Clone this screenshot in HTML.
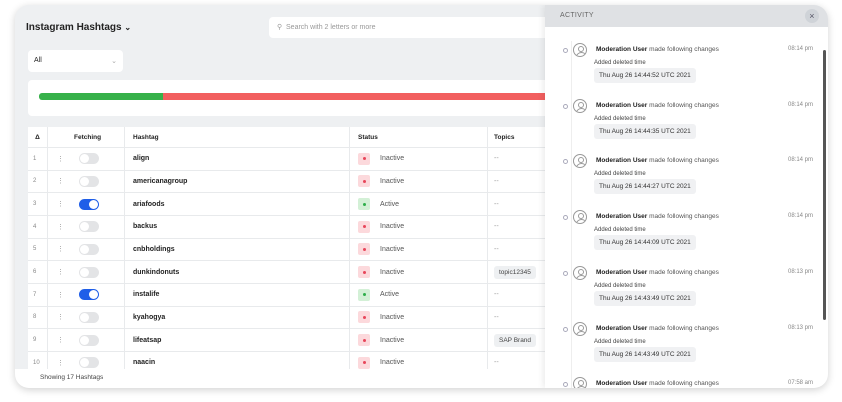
<!DOCTYPE html><html><head><style>
*{margin:0;padding:0;box-sizing:border-box}
html,body{width:842px;height:402px;overflow:hidden}
body{background:#fff;font-family:"Liberation Sans",sans-serif;position:relative;color:#222}
.frame{position:absolute;left:15px;top:5px;width:813px;height:383px;border-radius:14px;background:#eef0f2;box-shadow:0 2px 8px rgba(0,0,0,.18);overflow:hidden}
.a{position:absolute}
.row{position:absolute;left:13px;width:517px;height:22.7px;background:#fff;border-bottom:1px solid #e8eaec;font-size:7px;display:flex;align-items:center}
.c{position:absolute;top:0;height:100%;display:flex;align-items:center;border-right:1px solid #e8eaec}
.tg{width:20px;height:11px;border-radius:6px;background:#e3e4e6;position:relative}
.tg::after{content:"";position:absolute;left:1px;top:1px;width:9px;height:9px;border-radius:50%;background:#fff}
.tg.on{background:#1f5ee8}.tg.on::after{left:10px}
.st{width:12px;height:12px;border-radius:2px;background:#fcd9dc;position:relative;margin-right:10px}
.st::after{content:"";position:absolute;left:4.5px;top:4.5px;width:3px;height:3px;border-radius:50%;background:#e8465a}
.st.g{background:#d3f0d6}.st.g::after{background:#2eae4a}
.chip{background:#eef0f2;border-radius:3px;padding:3px 5px;font-size:6.5px;color:#444}
.ent{position:absolute;left:0;width:283px;height:56px}
.ent .dot{position:absolute;left:18px;top:3px;width:5px;height:5px;border:1px solid #aab;border-radius:50%}
.ent .av{position:absolute;left:28px;top:-2px;width:14px;height:14px;border:1.3px solid #999;border-radius:50%;overflow:hidden}
.ent .av::before{content:"";position:absolute;left:3.5px;top:2px;width:4px;height:4px;border:1.2px solid #999;border-radius:50%}
.ent .av::after{content:"";position:absolute;left:1.5px;top:8px;width:9px;height:8px;border:1.2px solid #999;border-radius:50%}
.ent .t{position:absolute;left:51px;top:1px;font-size:6.5px;color:#555}
.ent .t b{color:#222}
.ent .tm{position:absolute;left:243px;top:1px;font-size:6px;color:#888}
.ent .s{position:absolute;left:49px;top:15px;font-size:6px;color:#444}
.ent .d{position:absolute;left:49px;top:23px;background:#f0f1f3;border-radius:3px;padding:4px 5px;font-size:6.5px;color:#333}
</style></head><body>
<div class="frame">
<div class="a" style="left:11px;top:17px;font-size:10px;font-weight:bold;color:#222">Instagram Hashtags <span style="font-size:8px">&#8964;</span></div>
<div class="a" style="left:254px;top:12px;width:290px;height:21px;background:#fff;border-radius:4px;font-size:7px;color:#999;padding:6px 8px">&#9906; &nbsp;Search with 2 letters or more</div>
<div class="a" style="left:13px;top:45px;width:95px;height:22px;background:#fff;border-radius:4px;font-size:7px;padding:7px 6px">All<span style="position:absolute;right:6px;color:#aaa">&#8964;</span></div>
<div class="a" style="left:13px;top:75px;width:530px;height:36px;background:#fff;border-radius:4px"></div>
<div class="a" style="left:24px;top:88px;width:124px;height:7px;background:#37b14a;border-radius:3px 0 0 3px"></div>
<div class="a" style="left:148px;top:88px;width:390px;height:7px;background:#f25f5f"></div>
<div class="row" style="top:122px;height:21px;font-weight:bold;font-size:6.5px;background:#fff">
<div class="c" style="left:0;width:20px;justify-content:center">&#916;</div>
<div class="c" style="left:20px;width:77px;padding-left:26px">Fetching</div>
<div class="c" style="left:97px;width:225px;padding-left:8px">Hashtag</div>
<div class="c" style="left:322px;width:138px;padding-left:8px">Status</div>
<div class="c" style="left:460px;width:57px;padding-left:6px;border:0">Topics</div>
</div>
<div id="rows"></div>
<div class="a" style="left:0;top:364px;width:530px;height:19px;background:#fff;font-size:6.5px;color:#444;padding:5px 25px">Showing 17 Hashtags</div>
<div class="a" style="left:530px;top:0;width:283px;height:383px;background:#fff;box-shadow:-2px 0 6px rgba(0,0,0,.08);overflow:hidden">
<div class="a" style="left:0;top:0;width:283px;height:22px;background:#dfe1e4;font-size:7px;color:#666;padding:7px 15px;letter-spacing:.3px">ACTIVITY<span style="position:absolute;right:9px;top:4px;width:14px;height:14px;border-radius:50%;background:#cfd3d8;font-size:9px;text-align:center;line-height:14px;color:#556">&#215;</span></div>
<div class="a" style="left:26px;top:36px;width:1px;height:347px;background:#eee"></div>
<div class="a" style="left:278px;top:45px;width:3px;height:270px;background:#555;border-radius:2px"></div>
<div id="acts"></div>
</div>
</div>
<script>
var d=[["align",0,0,"--"],["americanagroup",0,0,"--"],["ariafoods",1,1,"--"],["backus",0,0,"--"],["cnbholdings",0,0,"--"],["dunkindonuts",0,0,"topic12345"],["instalife",1,1,"--"],["kyahogya",0,0,"--"],["lifeatsap",0,0,"SAP Brand"],["naacin",0,0,"--"]];
var h="";d.forEach(function(r,i){var t=143+i*22.65;h+='<div class="row" style="top:'+t+'px"><div class="c" style="left:0;width:20px;padding-left:5px;color:#888;font-size:6px">'+(i+1)+'</div><div class="c" style="left:20px;width:77px;padding-left:9px;color:#999">&#8942;<span style="width:15px;display:inline-block"></span><div class="tg'+(r[1]?' on':'')+'"></div></div><div class="c" style="left:97px;width:225px;padding-left:8px;font-weight:bold">'+r[0]+'</div><div class="c" style="left:322px;width:138px;padding-left:8px;color:#555"><div class="st'+(r[2]?' g':'')+'"></div>'+(r[2]?'Active':'Inactive')+'</div><div class="c" style="left:460px;width:57px;padding-left:6px;border:0;color:#999">'+(r[3]=="--"?'--':'<span class="chip">'+r[3]+'</span>')+'</div></div>';});
document.getElementById("rows").innerHTML=h;
var a=[["08:14 pm","Thu Aug 26 14:44:52 UTC 2021"],["08:14 pm","Thu Aug 26 14:44:35 UTC 2021"],["08:14 pm","Thu Aug 26 14:44:27 UTC 2021"],["08:14 pm","Thu Aug 26 14:44:09 UTC 2021"],["08:13 pm","Thu Aug 26 14:43:49 UTC 2021"],["08:13 pm","Thu Aug 26 14:43:49 UTC 2021"],["07:58 am",""]];
var g="";a.forEach(function(x,i){var t=40+i*55.7;g+='<div class="ent" style="top:'+t+'px"><div class="dot"></div><div class="av"></div><div class="t"><b>Moderation User</b> made following changes</div><div class="tm">'+x[0]+'</div>'+(x[1]?'<div class="s">Added deleted time</div><div class="d">'+x[1]+'</div>':'')+'</div>';});
document.getElementById("acts").innerHTML=g;
</script>
</body></html>
